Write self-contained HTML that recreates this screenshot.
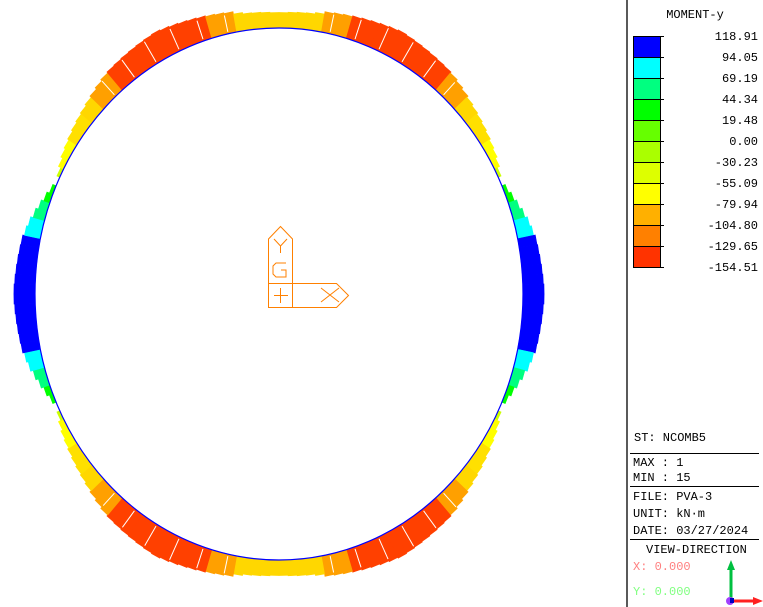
<!DOCTYPE html>
<html><head><meta charset="utf-8"><style>
html,body{margin:0;padding:0;background:#fff;width:763px;height:607px;overflow:hidden;}
svg{display:block}
text{font-family:"Liberation Mono",monospace;font-size:12px;fill:#000}
</style></head><body>
<svg id="s" width="763" height="607" viewBox="0 0 763 607">
<g id="band"></g>
<g id="slits"></g>
<ellipse cx="279" cy="294" rx="244" ry="266" fill="none" stroke="#0000ff" stroke-width="1.2"/>
<g stroke="#ff8000" stroke-width="1" fill="none">
<path d="M268.5 307.5 V239 L280.5 226.5 L292.5 239 V307.5 Z"/>
<path d="M268.5 283.5 H336.5 L348.5 295.5 L336.5 307.5 H268.5"/>
<path d="M292.5 283.5 V307.5"/>
<path d="M274 239 L280.5 246 L287 239 M280.5 246 V253"/>
<path d="M286 263 H276 L273 266 V274 L276 277 H286 V270 H281"/>
<path d="M274 295.5 H288 M280.5 288 V303"/>
<path d="M321 288 L339 302 M339 288 L321 302"/>
</g>
<line x1="627" y1="0" x2="627" y2="607" stroke="#000" stroke-width="1.3"/>
<text x="695" y="18" text-anchor="middle" font-size="11">MOMENT-y</text>
<g id="leg"></g>
<text x="634" y="441">ST: NCOMB5</text>
<line x1="630" y1="453.5" x2="759" y2="453.5" stroke="#000"/>
<text x="633" y="466">MAX : 1</text>
<text x="633" y="481">MIN : 15</text>
<line x1="630" y1="486.5" x2="759" y2="486.5" stroke="#000"/>
<text x="633" y="500">FILE: PVA-3</text>
<text x="633" y="517">UNIT: kN·m</text>
<text x="633" y="534">DATE: 03/27/2024</text>
<line x1="630" y1="539.5" x2="759" y2="539.5" stroke="#000"/>
<text x="646" y="553">VIEW-DIRECTION</text>
<text x="633" y="570" style="fill:#ff8080">X: 0.000</text>
<text x="633" y="595" style="fill:#80ff80">Y: 0.000</text>
<line x1="731" y1="568" x2="731" y2="598" stroke="#00c040" stroke-width="3"/>
<polygon points="727,570 735,570 731,560" fill="#00c040"/>
<line x1="733" y1="601" x2="755" y2="601" stroke="#ff2020" stroke-width="3"/>
<polygon points="753,597 753,605 763,601" fill="#ff2020"/>
<circle cx="730" cy="601" r="4" fill="#a040ff"/>
<rect x="730" y="598" width="4" height="5" fill="#0000c0"/>
</svg>
<script>
var NS="http://www.w3.org/2000/svg";
var kp=[[0,-85],[8,-95],[11,-115],[27,-155],[40,-130],[44,-110],[48,-90],[53,-70],[60,-40],[64,-10],[67,20],[71,50],[75,80],[79,100],[90,119]];
function M(p){for(var i=0;i<kp.length-1;i++){if(p>=kp[i][0]&&p<=kp[i+1][0]){var f=(p-kp[i][0])/(kp[i+1][0]-kp[i][0]);return kp[i][1]+f*(kp[i+1][1]-kp[i][1]);}}return 119;}
function col(m){if(m>94)return"#0000ff";if(m>69)return"#00ffff";if(m>44)return"#00ff80";if(m>19)return"#00ff00";if(m>0)return"#66ff00";if(m>-30)return"#ccff00";if(m>-55)return"#ffff00";if(m>-80)return"#ffe000";if(m>-104)return"#ffd700";if(m>-129)return"#ffa000";return"#ff4000";}
var g=document.getElementById("band"),S=document.getElementById("slits"),cx=279,cy=294,rx=244,ry=266,k=0.18;
var step=2;
for(var a=0;a<360;a+=step){
 var pm=a+step/2,pp=pm%180;if(pp>90)pp=180-pp;
 var m=M(pp),t=Math.abs(m)*k;
 var pts=[];
 [a,a+step].forEach(function(d){var r=d*Math.PI/180;pts.push((cx+rx*Math.sin(r))+","+(cy-ry*Math.cos(r)));});
 [a+step,a].forEach(function(d){var r=d*Math.PI/180;pts.push((cx+(rx+t)*Math.sin(r))+","+(cy-(ry+t)*Math.cos(r)));});
 var p=document.createElementNS(NS,"polygon");p.setAttribute("points",pts.join(" "));p.setAttribute("fill",col(m));p.setAttribute("stroke",col(m));p.setAttribute("stroke-width","0.6");g.appendChild(p);
 if(a%6==0 && m<-100){var r=a*Math.PI/180;var l=document.createElementNS(NS,"line");
  l.setAttribute("x1",cx+(rx+2)*Math.sin(r));l.setAttribute("y1",cy-(ry+2)*Math.cos(r));
  l.setAttribute("x2",cx+(rx+t-2)*Math.sin(r));l.setAttribute("y2",cy-(ry+t-2)*Math.cos(r));
  l.setAttribute("stroke","#fff");l.setAttribute("stroke-width","1");S.appendChild(l);}
}
var lc=["#0000ff","#00ffff","#00ff80","#00ff00","#66ff00","#aaff00","#ddff00","#ffff00","#ffb000","#ff8000","#ff3300"];
var lv=["118.91","94.05","69.19","44.34","19.48","0.00","-30.23","-55.09","-79.94","-104.80","-129.65","-154.51"];
var L=document.getElementById("leg");
for(var i=0;i<11;i++){var r=document.createElementNS(NS,"rect");r.setAttribute("x",633.5);r.setAttribute("y",36.5+i*21);r.setAttribute("width",27);r.setAttribute("height",21);r.setAttribute("fill",lc[i]);r.setAttribute("stroke","#000");L.appendChild(r);}
for(var i=0;i<12;i++){var l=document.createElementNS(NS,"line");l.setAttribute("x1",660);l.setAttribute("x2",664);l.setAttribute("y1",36.5+i*21);l.setAttribute("y2",36.5+i*21);l.setAttribute("stroke","#000");L.appendChild(l);
var tx=document.createElementNS(NS,"text");tx.setAttribute("x",758);tx.setAttribute("y",40+i*21);tx.setAttribute("text-anchor","end");tx.setAttribute("font-size","11");tx.textContent=lv[i];L.appendChild(tx);}
</script>
</body></html>
